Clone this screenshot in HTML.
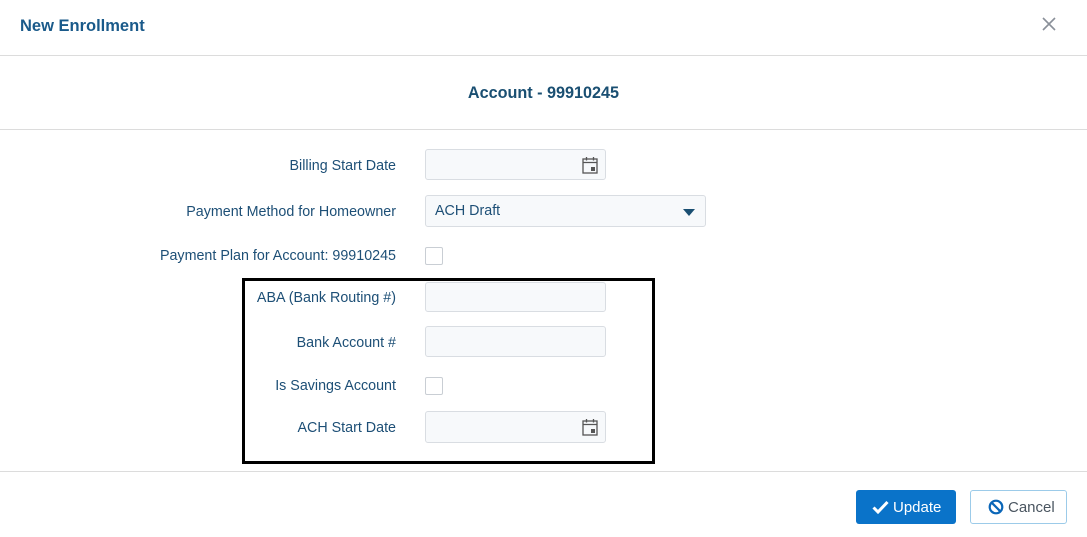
<!DOCTYPE html>
<html><head><style>
*{margin:0;padding:0;box-sizing:border-box}
body{width:1087px;height:537px;background:#fff;font-family:"Liberation Sans",sans-serif;position:relative;overflow:hidden;color:#1d4f76}
.a{position:absolute}
.hr{position:absolute;left:0;width:1087px;height:1px;background:#dcdcdc}
.lbl{position:absolute;right:691px;font-size:14.3px;color:#1d4f76;white-space:nowrap}
.in{position:absolute;left:425px;background:#f7f9fb;border:1px solid #d9dde2;border-radius:3px}
.cb{position:absolute;left:425px;width:18px;height:18px;border:1px solid #c9ced4;border-radius:2px;background:#fff}
.cal{position:absolute;right:7px;top:6px}
</style></head><body>
<div class="a" style="left:20px;top:17px;font-size:16.5px;font-weight:bold;color:#1a5a8a">New Enrollment</div>
<svg class="a" style="left:1042px;top:17px" width="14" height="14"><path d="M1 1L13 13M13 1L1 13" stroke="#8a9099" stroke-width="1.6"/></svg>
<div class="hr" style="top:55px"></div>
<div class="a" style="left:0;width:1087px;top:84px;text-align:center;font-size:16.2px;font-weight:bold;color:#1a4f72">Account - 99910245</div>
<div class="hr" style="top:129px"></div>

<div class="lbl" style="top:158px">Billing Start Date</div>
<div class="in" style="top:149px;width:181px;height:31px"><svg class="cal" width="16" height="18" viewBox="0 0 16 18"><rect x="1" y="3" width="14" height="14" fill="none" stroke="#555" stroke-width="1.3"/><path d="M1 6.5H15M4.5 1V4.5M11.5 1V4.5" stroke="#555" stroke-width="1.3"/><rect x="9" y="11" width="4" height="4" fill="#555"/></svg></div>

<div class="lbl" style="top:204px">Payment Method for Homeowner</div>
<div class="in" style="top:195px;width:281px;height:32px"><span class="a" style="left:9px;top:7px;font-size:14.3px;color:#1d4f76">ACH Draft</span><svg class="a" style="left:257px;top:13px" width="12" height="7"><path d="M0 0H12L6 7Z" fill="#1a4f72"/></svg></div>

<div class="lbl" style="top:248px">Payment Plan for Account: 99910245</div>
<div class="cb" style="top:247px"></div>

<div class="a" style="left:242px;top:278px;width:413px;height:186px;border:3px solid #000"></div>

<div class="lbl" style="top:290px">ABA (Bank Routing #)</div>
<div class="in" style="top:282px;width:181px;height:30px"></div>
<div class="lbl" style="top:335px">Bank Account #</div>
<div class="in" style="top:326px;width:181px;height:31px"></div>
<div class="lbl" style="top:378px">Is Savings Account</div>
<div class="cb" style="top:377px"></div>
<div class="lbl" style="top:420px">ACH Start Date</div>
<div class="in" style="top:411px;width:181px;height:32px"><svg class="cal" width="16" height="18" viewBox="0 0 16 18"><rect x="1" y="3" width="14" height="14" fill="none" stroke="#555" stroke-width="1.3"/><path d="M1 6.5H15M4.5 1V4.5M11.5 1V4.5" stroke="#555" stroke-width="1.3"/><rect x="9" y="11" width="4" height="4" fill="#555"/></svg></div>

<div class="hr" style="top:471px"></div>
<div class="a" style="left:856px;top:490px;width:100px;height:34px;background:#0a73c9;border-radius:3px;color:#fff;font-size:15px">
<svg class="a" style="left:16px;top:10px" width="17" height="14"><path d="M1.5 7.5L6 12L15.5 2" stroke="#fff" stroke-width="3" fill="none"/></svg>
<span class="a" style="left:37px;top:9px">Update</span></div>
<div class="a" style="left:970px;top:490px;width:97px;height:34px;border:1px solid #9ccbe9;border-radius:3px;color:#4a5560;font-size:15px">
<svg class="a" style="left:17px;top:8px" width="16" height="16"><circle cx="8" cy="8" r="6.3" stroke="#0a66b8" stroke-width="2.2" fill="none"/><path d="M3.7 3.7L12.3 12.3" stroke="#0a66b8" stroke-width="2.2"/></svg>
<span class="a" style="left:37px;top:8px">Cancel</span></div>
</body></html>
